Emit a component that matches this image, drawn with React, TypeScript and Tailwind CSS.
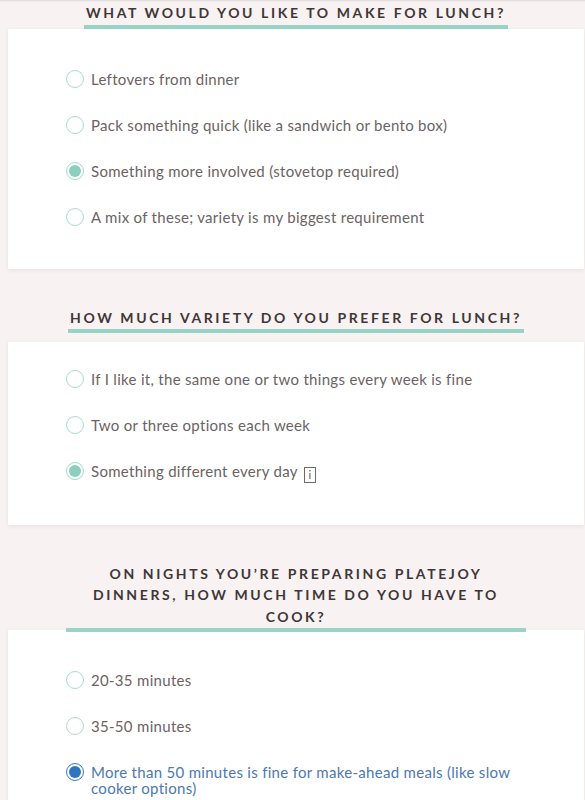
import React from "react";

type Option = { label: string; selected?: boolean; focus?: boolean; info?: boolean };

const sections: { title: string; padTop: string; padBottom: string; mt: string; cardMt: string; options: Option[] }[] = [
  {
    title: "What would you like to make for lunch?",
    padTop: "pt-[42px]",
    padBottom: "pb-[43px]",
    mt: "mt-0",
    cardMt: "mt-0",
    options: [
      { label: "Leftovers from dinner" },
      { label: "Pack something quick (like a sandwich or bento box)" },
      { label: "Something more involved (stovetop required)", selected: true },
      { label: "A mix of these; variety is my biggest requirement" },
    ],
  },
  {
    title: "How much variety do you prefer for lunch?",
    padTop: "pt-[29px]",
    padBottom: "pb-[42px]",
    mt: "mt-[38px]",
    cardMt: "mt-[9px]",
    options: [
      { label: "If I like it, the same one or two things every week is fine" },
      { label: "Two or three options each week" },
      { label: "Something different every day", selected: true, info: true },
    ],
  },
  {
    title: "On nights you’re preparing PlateJoy dinners, how much time do you have to cook?",
    padTop: "pt-[42px]",
    padBottom: "pb-[40px]",
    mt: "mt-[38px]",
    cardMt: "-mt-[2px]",
    options: [
      { label: "20-35 minutes" },
      { label: "35-50 minutes" },
      { label: "More than 50 minutes is fine for make-ahead meals (like slow cooker options)", selected: true, focus: true },
    ],
  },
];

// radio dot, teal when picked, blue when it has focus
const Radio = ({ selected, focus }: { selected?: boolean; focus?: boolean }) => {
  if (selected && focus) {
    return (
      <span className="mt-[-1px] flex h-[18px] w-[18px] shrink-0 items-center justify-center rounded-full border border-[#3478c2] bg-white">
        <span className="h-[12px] w-[12px] rounded-full bg-[#2f74bf]" />
      </span>
    );
  }
  if (selected) {
    return (
      <span className="mt-[-1px] flex h-[18px] w-[18px] shrink-0 items-center justify-center rounded-full border border-[#a3d9cc] bg-white">
        <span className="h-[12px] w-[12px] rounded-full bg-[#8ccfbf]" />
      </span>
    );
  }
  return <span className="mt-[-1px] h-[18px] w-[18px] shrink-0 rounded-full border border-[#a9dcd0] bg-white" />;
};

const App = () => {
  return (
    <div className="min-h-[800px] bg-[#f8f2f2] pl-2 pr-px font-['Lato',sans-serif]">
      <div className="-ml-2 -mr-px h-[2px] bg-gradient-to-b from-[#dedad9] to-[#f8f2f2]" />
      {sections.map((s) => (
        <div key={s.title}>
          <div className={`relative z-10 flex justify-center ${s.mt}`}>
            <h2 className="max-w-[80%] border-b-4 border-[#98d3c6] px-0.5 pb-px text-center text-[14px] font-bold uppercase leading-[21.5px] tracking-[2.6px] text-[#3f3737]">
              {s.title}
            </h2>
          </div>
          <div
            className={`flex flex-col gap-[29px] bg-white pl-[58px] pr-[40px] shadow-[0_1px_4px_rgba(0,0,0,0.08)] ${s.cardMt} ${s.padTop} ${s.padBottom}`}
          >
            {s.options.map((o) => (
              <label key={o.label} className="flex items-start gap-[7px]">
                <Radio selected={o.selected} focus={o.focus} />
                <span
                  className={`text-[15px] leading-[16px] tracking-[0.3px] ${
                    o.focus ? "text-[#4d78b1]" : "text-[#6b6363]"
                  }`}
                >
                  {o.label}
                  {o.info && (
                    <span className="ml-[6px] inline-flex h-[16px] w-[12px] items-center justify-center border border-[#6f6969] align-[-2px] text-[11px] leading-none text-[#555]">
                      i
                    </span>
                  )}
                </span>
              </label>
            ))}
          </div>
        </div>
      ))}
    </div>
  );
};

export default App;
